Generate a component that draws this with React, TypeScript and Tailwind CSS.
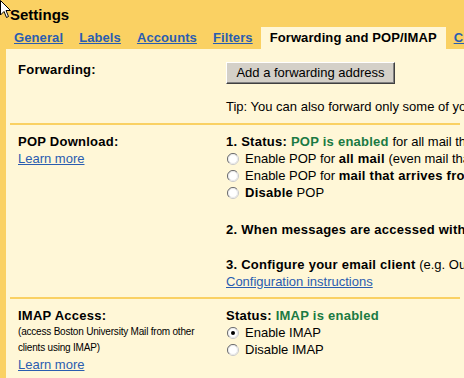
import React from "react";

const FONT = "font-['Liberation_Sans',Arial,sans-serif]";

function Radio({ checked = false }: { checked?: boolean }) {
  return (
    <svg width="12" height="12" viewBox="0 0 12 12" className="shrink-0">
      <circle cx="6" cy="6" r="5.5" fill="#fff" stroke="#c8c8c8" />
      <path d="M2.1 9.9 A5.5 5.5 0 0 1 9.9 2.1" fill="none" stroke="#6a6a6a" />
      <circle cx="6" cy="6" r="4.5" fill="none" stroke="#e8e8e8" />
      {checked && <circle cx="6" cy="6" r="2" fill="#000" />}
    </svg>
  );
}

function RadioRow({ checked, children }: { checked?: boolean; children: React.ReactNode }) {
  return (
    <div className="flex h-[17px] items-center gap-[6px] pl-[1px]">
      <Radio checked={checked} />
      <span>{children}</span>
    </div>
  );
}

const B = ({ children, className = "" }: { children: React.ReactNode; className?: string }) => (
  <b className={`tracking-[0.25px] ${className}`}>{children}</b>
);

const TABS = ["General", "Labels", "Accounts", "Filters"];

export default function App() {
  return (
    <div className={`relative h-[378px] w-[464px] overflow-hidden whitespace-nowrap bg-[#fad163] text-[13px] leading-[17px] text-black ${FONT}`}>
      {/* mouse pointer */}
      <svg className="absolute left-0 top-0" width="12" height="19" viewBox="0 0 12 19">
        <path d="M0.5 0.5 L0.5 15 L4 11.5 L6.5 17.5 L8.5 16.5 L6 10.5 L10.5 10.5 Z" fill="#fff" stroke="#000" strokeWidth="1" />
      </svg>

      <div className="pl-[10px] pt-[6px] text-[15px] font-bold leading-[18px]">Settings</div>

      <div className="mt-[3px] flex h-[22px] pl-[6px] text-[13px] font-bold leading-[22px] tracking-[0.1px]">
        {TABS.map((t) => (
          <a key={t} className="px-[8px] text-[#2a5db0] underline">
            {t}
          </a>
        ))}
        <span className="bg-[#fff7d7] px-[9px]">Forwarding and POP/IMAP</span>
        <a className="px-[8px] text-[#2a5db0] underline">Chat</a>
      </div>

      <div className="ml-[6px] bg-[#fff7d7] pt-[4px]">
        {/* Forwarding */}
        <div className="mx-[4px] flex pb-[8px] pt-[8px]">
          <div className="w-[216px] shrink-0 pl-[8px] font-bold tracking-[0.25px]">Forwarding:</div>
          <div>
            <button className="mt-[1px] h-[22px] w-[169px] border border-b-[#404040] border-l-white border-r-[#404040] border-t-white bg-[#d4d0c8] text-[13px] leading-[18px] shadow-[inset_-1px_-1px_0_#808080]">
              Add a forwarding address
            </button>
            <div className="mt-[14px]">Tip: You can also forward only some of your mail by creating a filter!</div>
          </div>
        </div>

        {/* POP */}
        <div className="mx-[4px] flex border-t-2 border-[#fad163] pb-[7px] pt-[8px]">
          <div className="w-[216px] shrink-0 pl-[8px]">
            <div className="font-bold tracking-[0.25px]">POP Download:</div>
            <a className="text-[#2a5db0] underline">Learn more</a>
          </div>
          <div>
            <div>
              <B>1. Status: </B>
              <B className="text-[#1b7a43]">POP is enabled</B> for all mail that has arrived since 9/15/08
            </div>
            <RadioRow>
              Enable POP for <B>all mail</B> (even mail that's already been downloaded)
            </RadioRow>
            <RadioRow>
              Enable POP for <B>mail that arrives from now on</B>
            </RadioRow>
            <RadioRow>
              <B>Disable</B> POP
            </RadioRow>
            <div className="mt-[20px] font-bold tracking-[0.25px]">2. When messages are accessed with POP</div>
            <div className="mt-[18px]">
              <B>3. Configure your email client</B> (e.g. Outlook, Eudora, Netscape Mail)
            </div>
            <a className="text-[#2a5db0] underline">Configuration instructions</a>
          </div>
        </div>

        {/* IMAP */}
        <div className="mx-[4px] flex border-t-2 border-[#fad163] pb-[8px] pt-[8px]">
          <div className="w-[216px] shrink-0 pl-[8px]">
            <div className="font-bold tracking-[0.25px]">IMAP Access:</div>
            <div className="text-[10px] leading-[16px] tracking-[-0.2px]">(access Boston University Mail from other</div>
            <div className="text-[10px] leading-[16px] tracking-[-0.2px]">clients using IMAP)</div>
            <a className="text-[#2a5db0] underline">Learn more</a>
          </div>
          <div>
            <div>
              <B>Status: </B>
              <B className="text-[#1b7a43]">IMAP is enabled</B>
            </div>
            <RadioRow checked>Enable IMAP</RadioRow>
            <RadioRow>Disable IMAP</RadioRow>
          </div>
        </div>
      </div>
    </div>
  );
}
